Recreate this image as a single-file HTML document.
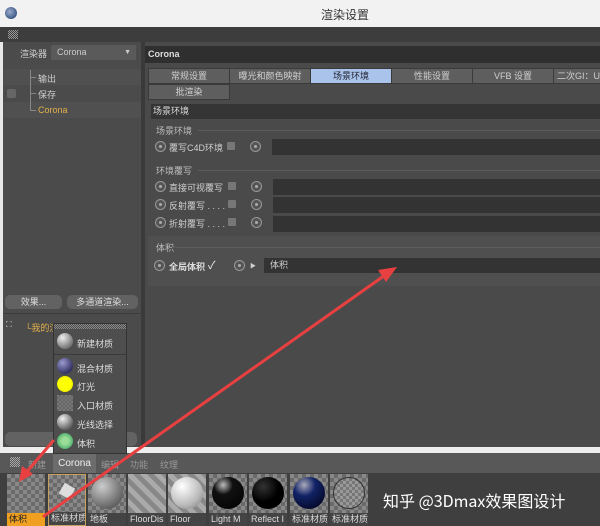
<!DOCTYPE html>
<html><head><meta charset="utf-8"><style>
*{margin:0;padding:0;box-sizing:border-box}
body{width:600px;height:526px;overflow:hidden;background:#4a4a4a;font-family:"Liberation Sans","Noto Sans CJK SC",sans-serif;font-size:9px;color:#c8c8c8;position:relative}
.a{position:absolute}
.tab{position:absolute;top:68px;height:16px;background:#5e5e5e;border:1px solid #3a3a3a;text-align:center;line-height:14px;color:#d0d0d0;font-size:9px}
.rad{position:absolute;width:11px;height:11px;border-radius:50%;border:1px solid #999;background:#555}
.rad::after{content:"";position:absolute;left:3px;top:3px;width:3px;height:3px;border-radius:50%;background:#aaa}
.chk{position:absolute;width:8px;height:8px;background:#777;border-radius:1px}
.fld{position:absolute;left:272px;right:0;height:16px;background:#333}
.lbl{position:absolute;color:#cfcfcf;font-size:9px}
.sec{position:absolute;left:156px;color:#bdbdbd;font-size:9px}
.line{position:absolute;height:1px;background:#5c5c5c;right:0}
.mat{position:absolute;top:474px;width:38px;height:52px;background:repeating-conic-gradient(#6a6a6a 0 25%,#888 0 50%) 0 0/8px 8px}
.mat .s{position:absolute;left:3px;top:3px;width:32px;height:32px;border-radius:50%}
.mat .t{position:absolute;bottom:0;left:0;right:0;height:13px;background:#444;color:#ddd;font-size:9px;line-height:13px;padding-left:2px;white-space:nowrap;overflow:hidden}
.mi{position:absolute;left:57px;width:16px;height:16px;border-radius:50%}
.mt{position:absolute;left:77px;color:#ddd;font-size:9px}
</style></head><body>
<div class="a" style="left:0;top:0;width:600px;height:27px;background:#f2f2f2"></div>
<div class="a" style="left:5px;top:7px;width:12px;height:12px;border-radius:50%;background:radial-gradient(circle at 40% 40%,#9ac,#1a3a6a)"></div>
<div class="a" style="left:0;top:6px;width:600px;text-align:center;font-size:12px;color:#333;padding-left:90px">渲染设置</div>
<div class="a" style="left:0;top:27px;width:600px;height:15px;background:#3d3d3d"></div>
<div class="a" style="left:8px;top:30px;width:10px;height:9px;background:repeating-conic-gradient(#999 0 25%,#3d3d3d 0 50%) 0 0/2px 2px"></div>
<div class="a" style="left:0;top:42px;width:3px;height:410px;background:#e8e8e8"></div>
<!-- left panel -->
<div class="a" style="left:3px;top:42px;width:138px;height:405px;background:#4b4b4b"></div>
<div class="a" style="left:141px;top:42px;width:4px;height:405px;background:#3a3a3a"></div>
<div class="lbl" style="left:20px;top:47px">渲染器</div>
<div class="a" style="left:51px;top:45px;width:85px;height:15px;background:#5a5a5a;border-radius:2px;color:#ccc;padding-left:6px;line-height:15px">Corona<span style="position:absolute;right:5px;font-size:7px">▼</span></div>
<div class="a" style="left:3px;top:69px;width:138px;height:16px;background:#505050"></div>
<div class="a" style="left:3px;top:102px;width:138px;height:16px;background:#505050"></div>
<div class="a" style="left:30px;top:70px;width:1px;height:40px;background:#888"></div>
<div class="a" style="left:30px;top:77px;width:6px;height:1px;background:#888"></div>
<div class="a" style="left:30px;top:93px;width:6px;height:1px;background:#888"></div>
<div class="a" style="left:30px;top:110px;width:6px;height:1px;background:#888"></div>
<div class="lbl" style="left:38px;top:72px">输出</div>
<div class="lbl" style="left:38px;top:88px">保存</div>
<div class="a" style="left:7px;top:89px;width:9px;height:9px;background:#666;border-radius:2px"></div>
<div class="lbl" style="left:38px;top:105px;color:#e3b04a">Corona</div>
<div class="a" style="left:5px;top:295px;width:57px;height:14px;background:#626262;border-radius:5px;text-align:center;line-height:14px;color:#ddd">效果...</div>
<div class="a" style="left:67px;top:295px;width:71px;height:14px;background:#626262;border-radius:5px;text-align:center;line-height:14px;color:#ddd">多通道渲染...</div>
<div class="a" style="left:3px;top:313px;width:138px;height:1px;background:#3c3c3c"></div>
<div class="lbl" style="left:6px;top:320px;font-size:8px">⛶</div>
<div class="lbl" style="left:25px;top:321px;color:#e3b04a">└我的渲染设置</div>
<div class="a" style="left:5px;top:432px;width:132px;height:14px;background:#626262;border-radius:5px"></div>
<!-- right panel -->
<div class="a" style="left:145px;top:46px;width:455px;height:17px;background:#2f2f2f;color:#ddd;font-weight:bold;padding-left:3px;line-height:17px">Corona</div>
<div class="tab" style="left:148px;width:82px">常规设置</div>
<div class="tab" style="left:229px;width:82px">曝光和颜色映射</div>
<div class="tab" style="left:310px;width:82px;background:#a9c3ea;color:#223">场景环境</div>
<div class="tab" style="left:391px;width:82px">性能设置</div>
<div class="tab" style="left:472px;width:82px">VFB 设置</div>
<div class="tab" style="left:553px;width:60px;text-align:left;padding-left:3px">二次GI：U</div>
<div class="tab" style="left:148px;top:84px;width:82px">批渲染</div>
<div class="a" style="left:151px;top:104px;width:449px;height:15px;background:#353535;color:#ddd;padding-left:2px;line-height:15px">场景环境</div>
<div class="sec" style="top:124px">场景环境</div><div class="line" style="left:198px;top:130px"></div>
<div class="rad" style="left:155px;top:141px"></div><div class="lbl" style="left:169px;top:141px">覆写C4D环境</div><div class="chk" style="left:227px;top:142px"></div>
<div class="rad" style="left:250px;top:141px"></div><div class="fld" style="top:139px"></div>
<div class="sec" style="top:164px">环境覆写</div><div class="line" style="left:198px;top:170px"></div>
<div class="rad" style="left:155px;top:181px"></div><div class="lbl" style="left:169px;top:181px">直接可视覆写</div><div class="chk" style="left:228px;top:182px"></div>
<div class="rad" style="left:251px;top:181px"></div><div class="fld" style="left:273px;top:179px"></div>
<div class="rad" style="left:155px;top:199px"></div><div class="lbl" style="left:169px;top:199px">反射覆写 . . . .</div><div class="chk" style="left:228px;top:200px"></div>
<div class="rad" style="left:251px;top:199px"></div><div class="fld" style="left:273px;top:197px"></div>
<div class="rad" style="left:155px;top:217px"></div><div class="lbl" style="left:169px;top:217px">折射覆写 . . . .</div><div class="chk" style="left:228px;top:218px"></div>
<div class="rad" style="left:251px;top:217px"></div><div class="fld" style="left:273px;top:216px"></div>
<div class="a" style="left:148px;top:236px;width:452px;height:50px;background:#4f4f4f"></div>
<div class="sec" style="top:241px">体积</div><div class="line" style="left:172px;top:247px"></div>
<div class="rad" style="left:154px;top:260px"></div><div class="lbl" style="left:169px;top:260px;font-weight:bold;color:#e0e0e0">全局体积</div><div class="lbl" style="left:208px;top:257px;font-size:11px;color:#eee">✓</div>
<div class="rad" style="left:234px;top:260px"></div><div class="lbl" style="left:250px;top:261px;font-size:6px">▶</div>
<div class="a" style="left:264px;top:258px;width:336px;height:15px;background:#333;color:#ccc;padding-left:6px;line-height:15px">体积</div>
<!-- white separator -->
<div class="a" style="left:0;top:447px;width:600px;height:6px;background:#eeeeee"></div>
<!-- material manager -->
<div class="a" style="left:0;top:453px;width:600px;height:20px;background:#585858"></div>
<div class="a" style="left:10px;top:457px;width:10px;height:10px;background:repeating-conic-gradient(#aaa 0 25%,#585858 0 50%) 0 0/2px 2px"></div>
<div class="lbl" style="left:28px;top:458px;color:#999">新建</div>
<div class="a" style="left:53px;top:454px;width:43px;height:19px;background:#6c6c6c;color:#eee;font-size:10px;line-height:19px;text-align:center">Corona</div>
<div class="lbl" style="left:101px;top:458px;color:#999">编辑</div>
<div class="lbl" style="left:130px;top:458px;color:#999">功能</div>
<div class="lbl" style="left:160px;top:458px;color:#999">纹理</div>
<div class="a" style="left:0;top:473px;width:600px;height:53px;background:#3f3f3f"></div>
<div class="mat" style="left:7px"><div class="t" style="background:#f0a020;color:#222">体积</div></div>
<div class="mat" style="left:48px;border:1px solid #c8a060"><div class="a" style="left:12px;top:10px;width:12px;height:12px;background:#ddd;transform:rotate(30deg)"></div><div class="t">标准材质</div></div>
<div class="mat" style="left:88px"><div class="s" style="background:radial-gradient(circle at 35% 30%,#ccc,#666 70%,#444)"></div><div class="t">地板</div></div>
<div class="mat" style="left:128px;background:repeating-linear-gradient(45deg,#888 0 5px,#aaa 5px 10px)"><div class="t">FloorDis</div></div>
<div class="mat" style="left:168px;background:repeating-linear-gradient(45deg,#888 0 5px,#aaa 5px 10px)"><div class="s" style="background:radial-gradient(circle at 35% 30%,#fff,#bbb 60%,#777)"></div><div class="t">Floor</div></div>
<div class="mat" style="left:209px"><div class="s" style="background:radial-gradient(circle at 35% 25%,#bbb,#111 30%,#000)"></div><div class="t">Light M</div></div>
<div class="mat" style="left:249px"><div class="s" style="background:radial-gradient(circle at 35% 30%,#333,#000 50%)"></div><div class="t">Reflect I</div></div>
<div class="mat" style="left:290px"><div class="s" style="background:radial-gradient(circle at 35% 25%,#aab,#112266 35%,#001)"></div><div class="t">标准材质</div></div>
<div class="mat" style="left:330px"><div class="s" style="border:1px solid #333;background:repeating-conic-gradient(#777 0 25%,#999 0 50%) 0 0/6px 6px"></div><div class="t">标准材质</div></div>
<div class="a" style="left:383px;top:488px;color:#fff;font-size:16px;font-family:'Noto Sans CJK SC','Liberation Sans',sans-serif">知乎 @3Dmax效果图设计</div>
<!-- popup menu -->
<div class="a" style="left:53px;top:323px;width:74px;height:131px;background:#4e4e4e;border:1px solid #333"></div>
<div class="a" style="left:54px;top:324px;width:72px;height:5px;background:repeating-conic-gradient(#888 0 25%,#4e4e4e 0 50%) 0 0/2px 2px"></div>
<div class="mi" style="top:333px;background:radial-gradient(circle at 35% 30%,#eee,#777 70%)"></div><div class="mt" style="top:337px">新建材质</div>
<div class="a" style="left:54px;top:354px;width:72px;height:1px;background:#3a3a3a"></div>
<div class="mi" style="top:358px;background:radial-gradient(circle at 35% 30%,#99c,#336 70%)"></div><div class="mt" style="top:362px">混合材质</div>
<div class="mi" style="top:376px;background:radial-gradient(circle,#ff0 55%,#cc0)"></div><div class="mt" style="top:380px">灯光</div>
<div class="mi" style="top:395px;border-radius:0;background:repeating-conic-gradient(#666 0 25%,#777 0 50%) 0 0/4px 4px"></div><div class="mt" style="top:399px">入口材质</div>
<div class="mi" style="top:414px;background:radial-gradient(circle at 35% 30%,#eee,#666 70%)"></div><div class="mt" style="top:418px">光线选择</div>
<div class="mi" style="top:433px;background:radial-gradient(circle,#9d9 30%,#4a6 80%)"></div><div class="mt" style="top:437px">体积</div>
<!-- arrows -->
<svg class="a" style="left:0;top:0" width="600" height="526">
<g stroke="#e84040" stroke-width="3" fill="#e84040" stroke-linecap="round">
<line x1="44" y1="516" x2="388" y2="273"/>
<polygon points="397,267 378,270 386,282" stroke="none"/>
<line x1="53" y1="441" x2="25" y2="474"/>
<polygon points="19,482 22,466 33,474" stroke="none"/>
</g></svg>
</body></html>
